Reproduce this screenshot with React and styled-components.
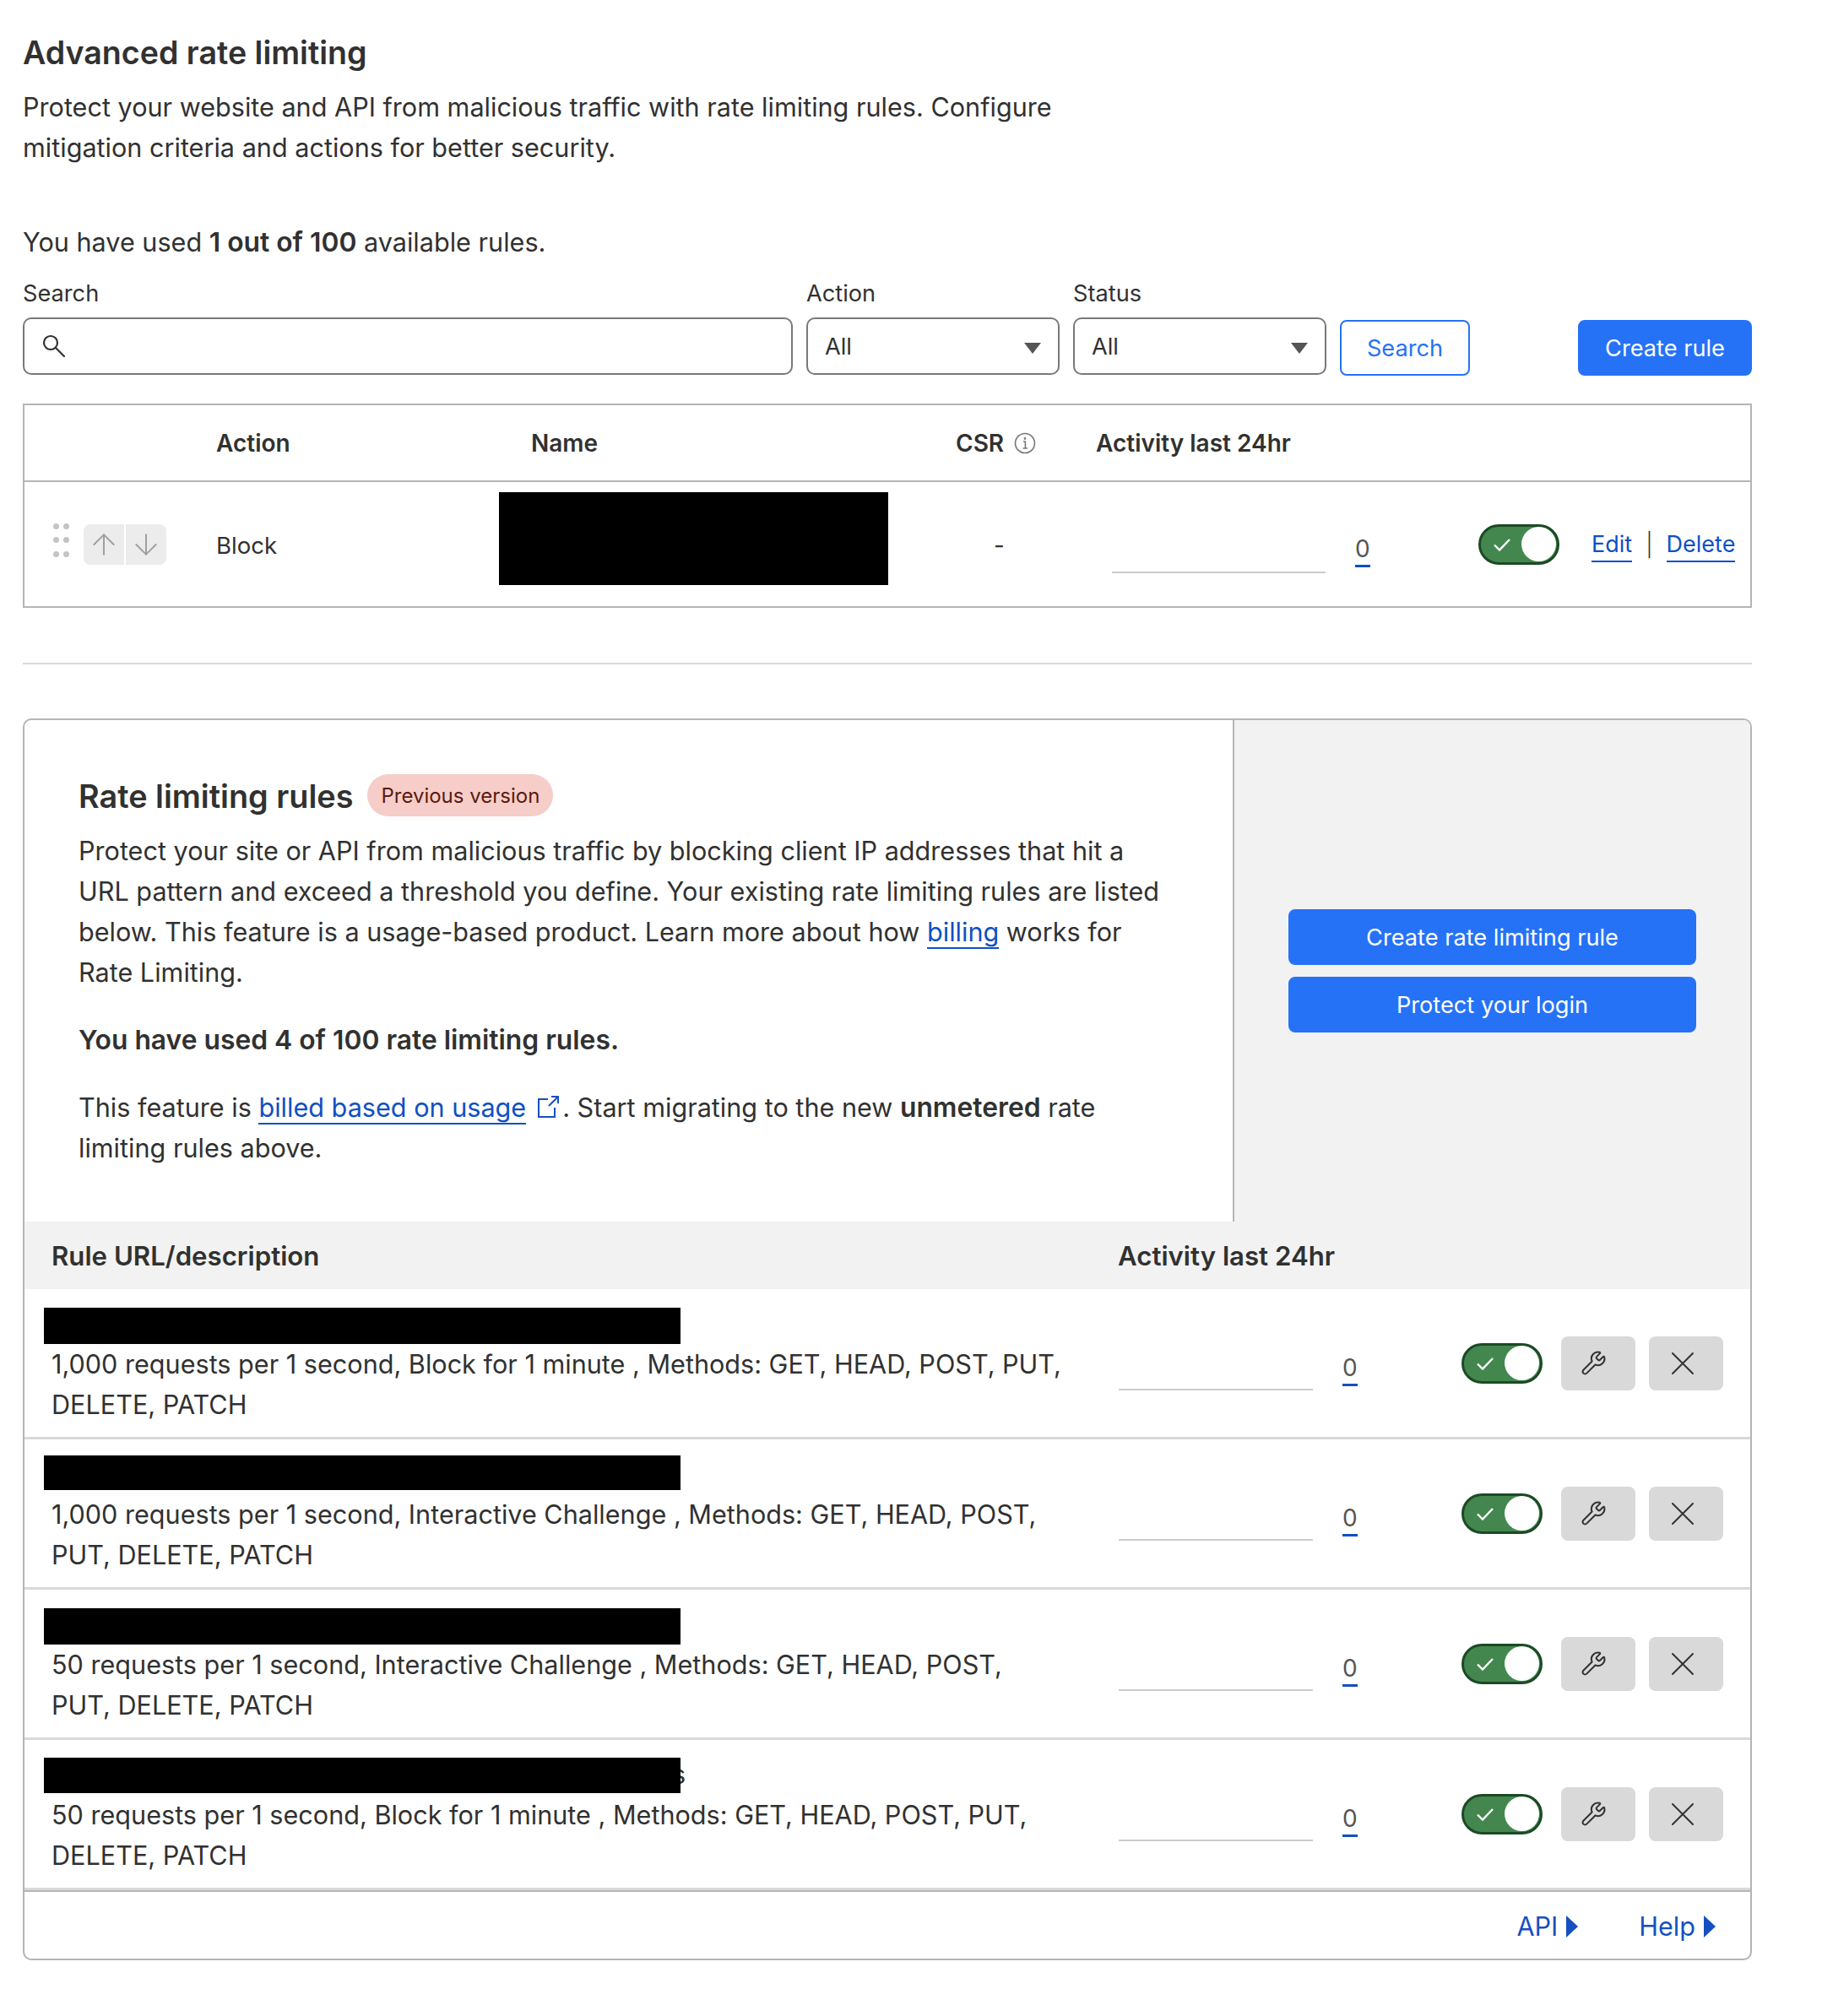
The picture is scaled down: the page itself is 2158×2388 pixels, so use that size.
import React from 'react';
import styled, { createGlobalStyle } from 'styled-components';
import { ArrowUp, ArrowDown, Wrench } from 'lucide-react';

const GlobalStyle = createGlobalStyle`
    * {
        box-sizing: border-box;
    }
    body {
        margin: 0;
        background: #fff;
        color: #313131;
        font-family: 'Inter', 'Liberation Sans', sans-serif;
        font-size: 30.6px;
        line-height: 48px;
    }
`;

const Page = styled.div`
    width: 2158px;
    height: 2388px;
    padding: 39px 83px 0 27px;
`;

const Title = styled.h1`
    margin: 0 0 16px;
    font-size: 37.6px;
    line-height: 48px;
    font-weight: 600;
`;

const Lead = styled.p`
    margin: 0 0 64px;
    width: 1300px;
`;

const Strong = styled.b`
    font-size: 31.8px;
    font-weight: 630;
`;

const Usage = styled.p`
    margin: 0 0 19px;
`;

const FilterBar = styled.div`
    display: flex;
    align-items: flex-end;
    gap: 16px;
    margin-bottom: 33px;
`;

const Field = styled.label`
    display: flex;
    flex-direction: column;
    gap: 10px;
    width: ${p => p.$width}px;
    margin-bottom: 1px;
    font-size: 27.2px;
    line-height: 36px;
`;

const InputBox = styled.div`
    display: flex;
    align-items: center;
    justify-content: ${p => (p.$select ? 'space-between' : 'flex-start')};
    height: 68px;
    padding: ${p => (p.$select ? '2px 20px 0 20px' : '0 0 0 21px')};
    border: 2px solid #797979;
    border-radius: 10px;
`;

const Caret = styled.span`
    width: 0;
    height: 0;
    margin-top: 2px;
    border-left: 10px solid transparent;
    border-right: 10px solid transparent;
    border-top: 13px solid #555;
`;

const Button = styled.button`
    height: 66px;
    padding: 0;
    border: 2px solid #2672f7;
    border-radius: 8px;
    background: ${p => (p.$outline ? '#fff' : '#2672f7')};
    color: ${p => (p.$outline ? '#2672f7' : '#fff')};
    font-family: inherit;
    font-size: 27.2px;
    width: ${p => (p.$width ? `${p.$width}px` : '100%')};
    margin-left: ${p => (p.$push ? 'auto' : 0)};
`;

const RulesTable = styled.div`
    border: 2px solid #b5b5b5;
`;

const RulesGrid = styled.div`
    display: grid;
    grid-template-columns: 227px 373px 503px 166px 453px 1fr;
    align-items: center;
    height: ${p => p.$height}px;
    border-bottom: ${p => (p.$last ? 'none' : '2px solid #b5b5b5')};
    font-size: 27.6px;
`;

const HeadCell = styled.div`
    display: flex;
    align-items: center;
    gap: 12px;
    font-size: 28px;
    font-weight: 600;
`;

const Reorder = styled.div`
    display: flex;
    align-items: center;
    gap: 17px;
    padding-left: 34px;
`;

const DragDots = styled.div`
    display: grid;
    grid-template-columns: 7px 7px;
    gap: 9.5px 5px;
    margin-bottom: 10px;
    span {
        width: 7px;
        height: 7px;
        border-radius: 50%;
        background: #c4c4c4;
    }
`;

const ArrowGroup = styled.div`
    display: flex;
    gap: 2px;
`;

const ArrowButton = styled.div`
    display: flex;
    align-items: center;
    justify-content: center;
    width: 48px;
    height: 48px;
    background: #ececec;
    color: #a0a0a0;
    border-radius: ${p => (p.$side === 'left' ? '8px 0 0 8px' : '0 8px 8px 0')};
`;

const RuleName = styled.div`
    padding-top: 2px;
`;

const Redaction = styled.div`
    position: relative;
    z-index: 1;
    flex: none;
    background: #000;
    width: ${p => p.$width}px;
    height: ${p => p.$height}px;
    margin: ${p => p.$margin || 0};
`;

const Dash = styled.div`
    padding: 2px 0 0 45px;
`;

const Activity = styled.div`
    display: flex;
    align-items: flex-end;
    gap: 35px;
    align-self: start;
    height: ${p => p.$height}px;
    padding-left: ${p => p.$indent}px;
`;

const Sparkline = styled.div`
    width: ${p => p.$width}px;
    height: 2px;
    background: #ccc;
`;

const Zero = styled.a`
    margin-bottom: ${p => p.$lift}px;
    border-bottom: 3px solid #0f50c4;
    color: #555;
    font-size: 28px;
    line-height: 38px;
`;

const Controls = styled.div`
    display: flex;
    align-items: center;
`;

const ToggleTrack = styled.div`
    display: flex;
    flex: none;
    align-items: center;
    justify-content: space-between;
    width: 96px;
    height: 48px;
    padding: 0 1px 0 15px;
    border: 3px solid #1c4a25;
    border-radius: 24px;
    background: #43874f;
`;

const ToggleKnob = styled.span`
    width: 41px;
    height: 41px;
    border-radius: 50%;
    background: #fff;
`;

const TextLink = styled.a`
    color: #0f50c4;
    border-bottom: 2px solid #0f50c4;
`;

const LinkGroup = styled.div`
    display: flex;
    align-items: center;
    gap: 16px;
    margin-left: 38px;
    padding-top: 3px;
    font-size: 27px;
    line-height: 38px;
`;

const Pipe = styled.span`
    font-weight: 300;
`;

const Divider = styled.hr`
    height: 2px;
    margin: 65px 0 64px;
    border: 0;
    background: #d9d9d9;
`;

const LegacyCard = styled.section`
    border: 2px solid #b5b5b5;
    border-radius: 10px;
    overflow: hidden;
`;

const Intro = styled.div`
    display: flex;
`;

const IntroText = styled.div`
    width: 1433px;
    padding: 64px 64px 63px 64px;
    border-right: 2px solid #b5b5b5;
    p {
        margin: 0 0 32px;
    }
    p:last-child {
        margin: 0;
    }
`;

const HeadingRow = styled.div`
    display: flex;
    align-items: center;
    gap: 17px;
    margin-bottom: 17px;
`;

const Heading = styled.h2`
    height: 50px;
    margin: 0;
    font-size: 37.8px;
    line-height: 53px;
    font-weight: 600;
`;

const Badge = styled.span`
    height: 50px;
    padding: 0 16px;
    border-radius: 25px;
    background: #f6cdc8;
    color: #5a1a10;
    font-size: 24px;
    line-height: 52px;
`;

const ExternalIcon = styled.svg`
    margin: 0 4px 0 13px;
    vertical-align: -1px;
`;

const IntroActions = styled.div`
    flex: 1;
    display: flex;
    flex-direction: column;
    justify-content: center;
    gap: 14px;
    padding: 0 64px;
    background: #f2f2f2;
`;

const LegacyHeader = styled.div`
    display: grid;
    grid-template-columns: 1295px 1fr;
    align-items: center;
    height: 80px;
    padding: 2px 0 0 32px;
    background: #f2f2f2;
    font-size: 31.2px;
    font-weight: 600;
    span {
        margin-left: -32px;
    }
`;

const LegacyRow = styled.div`
    display: grid;
    grid-template-columns: 1296px 406px 1fr;
    align-items: center;
    height: 178px;
    border-bottom: 3px solid #d9d9d9;
`;

const Description = styled.div`
    align-self: start;
    padding-left: 32px;
`;

const NameLine = styled.div`
    display: flex;
    align-items: flex-end;
    height: 65px;
    margin-left: -9px;
`;

const Peek = styled.span`
    margin: 0 0 ${p => p.$bottom}px -10px;
`;

const IconButton = styled.div`
    display: flex;
    align-items: center;
    justify-content: center;
    width: 88px;
    height: 64px;
    margin-left: ${p => p.$gap}px;
    padding-right: ${p => p.$inset}px;
    border-radius: 8px;
    background: #d9d9d9;
    color: #333;
`;

const LegacyFooter = styled.div`
    display: flex;
    justify-content: flex-end;
    gap: 72px;
    height: 81px;
    padding: 17px 41px 0 0;
    border-top: 2px solid #b5b5b5;
`;

const FooterLink = styled.a`
    display: flex;
    align-items: center;
    gap: 10px;
    height: 48px;
    color: #1650c0;
`;

const Pointer = styled.span`
    border-top: 13px solid transparent;
    border-bottom: 13px solid transparent;
    border-left: 14px solid #1650c0;
`;

function SearchIcon() {
    return (
        <svg width="28" height="28" viewBox="0 0 28 28" fill="none" stroke="#313131" strokeWidth="2.2">
            <circle cx="10" cy="10" r="8" />
            <path d="M16 16l10 10" strokeLinecap="round" />
        </svg>
    );
}

function InfoIcon() {
    return (
        <svg width="26" height="26" viewBox="0 0 26 26" fill="none" stroke="#777" strokeWidth="1.6">
            <circle cx="13" cy="13" r="11.5" />
            <path d="M11 11h2.4v8M10.5 19h5.5" />
            <circle cx="13" cy="7.5" r="0.6" />
        </svg>
    );
}

function CheckIcon() {
    return (
        <svg width="20" height="16" viewBox="0 0 20 16" fill="none" stroke="#fff" strokeWidth="2.4">
            <path d="M1 8.5l6 6L19 2" />
        </svg>
    );
}

function CloseIcon() {
    return (
        <svg width="26" height="26" viewBox="0 0 26 26" fill="none" stroke="#333" strokeWidth="2">
            <path d="M1 1l24 24M25 1L1 25" strokeLinecap="round" />
        </svg>
    );
}

function Toggle() {
    return (
        <ToggleTrack>
            <CheckIcon />
            <ToggleKnob />
        </ToggleTrack>
    );
}

const legacyRules = [
    {
        height: 43,
        first: '1,000 requests per 1 second, Block for 1 minute , Methods: GET, HEAD, POST, PUT,',
        second: 'DELETE, PATCH'
    },
    {
        height: 41,
        bottom: 5,
        first: '1,000 requests per 1 second, Interactive Challenge , Methods: GET, HEAD, POST,',
        second: 'PUT, DELETE, PATCH'
    },
    {
        height: 43,
        first: '50 requests per 1 second, Interactive Challenge , Methods: GET, HEAD, POST,',
        second: 'PUT, DELETE, PATCH'
    },
    {
        height: 42,
        bottom: 2,
        peek: 's',
        first: '50 requests per 1 second, Block for 1 minute , Methods: GET, HEAD, POST, PUT,',
        second: 'DELETE, PATCH'
    }
];

export default function App() {
    return (
        <Page>
            <GlobalStyle />
            <Title>Advanced rate limiting</Title>
            <Lead>
                Protect your website and API from malicious traffic with rate limiting rules. Configure mitigation
                criteria and actions for better security.
            </Lead>
            <Usage>
                You have used <Strong>1 out of 100</Strong> available rules.
            </Usage>

            <FilterBar>
                <Field $width={912}>
                    Search
                    <InputBox>
                        <SearchIcon />
                    </InputBox>
                </Field>
                <Field $width={300}>
                    Action
                    <InputBox $select>
                        All
                        <Caret />
                    </InputBox>
                </Field>
                <Field $width={300}>
                    Status
                    <InputBox $select>
                        All
                        <Caret />
                    </InputBox>
                </Field>
                <Button $outline $width={154}>
                    Search
                </Button>
                <Button $width={206} $push>
                    Create rule
                </Button>
            </FilterBar>

            <RulesTable>
                <RulesGrid $height={91}>
                    <div />
                    <HeadCell>Action</HeadCell>
                    <HeadCell>Name</HeadCell>
                    <HeadCell>
                        CSR <InfoIcon />
                    </HeadCell>
                    <HeadCell>Activity last 24hr</HeadCell>
                    <div />
                </RulesGrid>
                <RulesGrid $height={147} $last>
                    <Reorder>
                        <DragDots>
                            <span />
                            <span />
                            <span />
                            <span />
                            <span />
                            <span />
                        </DragDots>
                        <ArrowGroup>
                            <ArrowButton $side="left">
                                <ArrowUp size={40} strokeWidth={1.2} />
                            </ArrowButton>
                            <ArrowButton $side="right">
                                <ArrowDown size={40} strokeWidth={1.2} />
                            </ArrowButton>
                        </ArrowGroup>
                    </Reorder>
                    <RuleName>Block</RuleName>
                    <Redaction $width={461} $height={110} $margin="0 0 14px -38px" />
                    <Dash>-</Dash>
                    <Activity $height={108} $indent={19}>
                        <Sparkline $width={253} />
                        <Zero $lift={7}>0</Zero>
                    </Activity>
                    <Controls>
                        <Toggle />
                        <LinkGroup>
                            <TextLink>Edit</TextLink>
                            <Pipe>|</Pipe>
                            <TextLink>Delete</TextLink>
                        </LinkGroup>
                    </Controls>
                </RulesGrid>
            </RulesTable>

            <Divider />

            <LegacyCard>
                <Intro>
                    <IntroText>
                        <HeadingRow>
                            <Heading>Rate limiting rules</Heading>
                            <Badge>Previous version</Badge>
                        </HeadingRow>
                        <p>
                            Protect your site or API from malicious traffic by blocking client IP addresses that hit a
                            URL pattern and exceed a threshold you define. Your existing rate limiting rules are listed
                            below. This feature is a usage-based product. Learn more about how{' '}
                            <TextLink>billing</TextLink> works for Rate Limiting.
                        </p>
                        <p>
                            <Strong>You have used 4 of 100 rate limiting rules.</Strong>
                        </p>
                        <p>
                            This feature is <TextLink>billed based on usage</TextLink>
                            <ExternalIcon width="26" height="26" viewBox="0 0 26 26" fill="none" stroke="#1650c0" strokeWidth="2">
                                <path d="M13 4H2v21h19V14M14 12L25 1M17 1h8v8" />
                            </ExternalIcon>
                            . Start migrating to the new <Strong>unmetered</Strong> rate limiting rules above.
                        </p>
                    </IntroText>
                    <IntroActions>
                        <Button>Create rate limiting rule</Button>
                        <Button>Protect your login</Button>
                    </IntroActions>
                </Intro>

                <LegacyHeader>
                    <div>Rule URL/description</div>
                    <span>Activity last 24hr</span>
                </LegacyHeader>

                {legacyRules.map(rule => (
                    <LegacyRow key={rule.first}>
                        <Description>
                            <NameLine>
                                <Redaction
                                    $width={754}
                                    $height={rule.height}
                                    $margin={`0 0 ${rule.bottom || 0}px 0`}
                                />
                                {rule.peek && <Peek $bottom={0}>{rule.peek}</Peek>}
                            </NameLine>
                            {rule.first}
                            <br />
                            {rule.second}
                        </Description>
                        <Activity $height={120} $indent={0}>
                            <Sparkline $width={230} />
                            <Zero $lift={5}>0</Zero>
                        </Activity>
                        <Controls>
                            <Toggle />
                            <IconButton $gap={22} $inset={11}>
                                <Wrench size={31} strokeWidth={1.6} />
                            </IconButton>
                            <IconButton $gap={16} $inset={9}>
                                <CloseIcon />
                            </IconButton>
                        </Controls>
                    </LegacyRow>
                ))}

                <LegacyFooter>
                    <FooterLink>
                        API <Pointer />
                    </FooterLink>
                    <FooterLink>
                        Help <Pointer />
                    </FooterLink>
                </LegacyFooter>
            </LegacyCard>
        </Page>
    );
}
